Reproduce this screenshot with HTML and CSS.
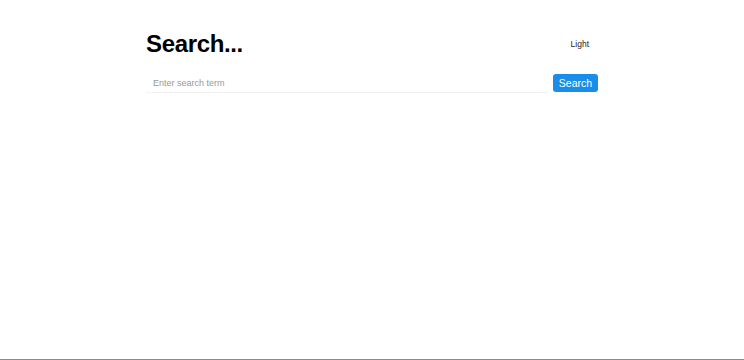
FILE: index.html
```html
<!DOCTYPE html>
<html lang="en">
<head>
    <meta charset="UTF-8">
    <meta name="viewport" content="width=device-width, initial-scale=1.0">
    <title>Search</title>
    <link rel="stylesheet" href="styles.css">
</head>
<body>
    <div class="app">
        <header class="top-bar">
            <h1>Search...</h1>
            <button class="theme-btn" id="themeBtn">Light</button>
        </header>

        <form class="search-form" id="searchForm">
            <input class="search-input" type="text" placeholder="Enter search term">
            <button class="search-btn" type="submit">Search</button>
        </form>
    </div>
</body>
</html>
```

FILE: styles.css
```css
html, body {
    height: 100%;
}

body {
    margin: 0;
    font-family: 'Liberation Sans', Arial, sans-serif;
    background-color: #fff;
    color: #000;
    box-sizing: border-box;
    border-bottom: 1px solid #8a8a8a;
}

.app {
    width: 452px;
    margin: 0 auto;
    padding-top: 29px;
}

.top-bar {
    display: flex;
    align-items: center;
    justify-content: space-between;
    height: 30px;
}

h1 {
    margin: 0;
    font-size: 24px;
    font-weight: bold;
    letter-spacing: -0.35px;
}

.theme-btn {
    background: none;
    border: none;
    padding: 0 9px 0 0;
    font-family: inherit;
    font-size: 8.5px;
    color: #222;
    cursor: pointer;
}

.search-form {
    display: flex;
    align-items: center;
    gap: 5px;
    margin-top: 14px;
}

.search-input {
    flex: 1;
    height: 18px;
    padding: 1px 7px 0;
    border: none;
    border-bottom: 1px solid #f2f2f2;
    font-family: inherit;
    font-size: 9px;
    outline: none;
}

.search-input::placeholder {
    color: #999;
}

.search-btn {
    width: 45px;
    height: 18px;
    padding: 0;
    border: none;
    border-radius: 3px;
    background-color: #1a8de9;
    color: #fff;
    font-family: inherit;
    font-size: 10.5px;
    cursor: pointer;
}
```
